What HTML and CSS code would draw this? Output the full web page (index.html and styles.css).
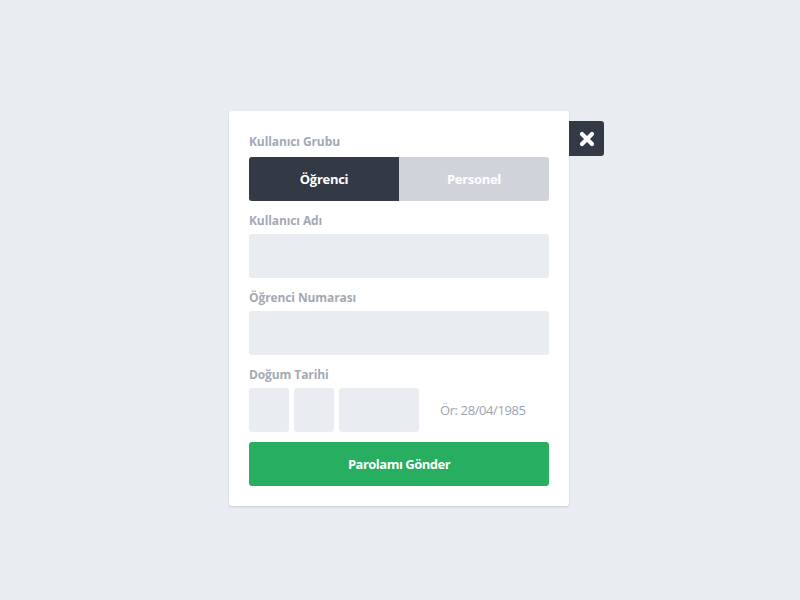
FILE: index.html
```html
<!DOCTYPE html>
<html lang="tr">
<head>
<meta charset="utf-8">
<title>Parola</title>
<link rel="stylesheet" href="styles.css">
</head>
<body>
<div class="page">
  <div class="card">
    <form class="form">
      <div class="field">
        <div class="label label-first">Kullanıcı Grubu</div>
        <div class="segment">
          <div class="seg seg-active">Öğrenci</div>
          <div class="seg">Personel</div>
        </div>
      </div>
      <div class="field">
        <div class="label">Kullanıcı Adı</div>
        <div class="input"></div>
      </div>
      <div class="field">
        <div class="label">Öğrenci Numarası</div>
        <div class="input"></div>
      </div>
      <div class="field">
        <div class="label">Doğum Tarihi</div>
        <div class="date-row">
          <div class="input small"></div>
          <div class="input small"></div>
          <div class="input year"></div>
          <div class="hint">Ör: 28/04/1985</div>
        </div>
      </div>
      <div class="submit">Parolamı Gönder</div>
    </form>
    <div class="close">
      <svg width="16" height="16" viewBox="0 0 16 16"><path d="M3 3 L13 13 M13 3 L3 13" stroke="#fff" stroke-width="4.2" stroke-linecap="round" fill="none"/></svg>
    </div>
  </div>
</div>
</body>
</html>
```

FILE: styles.css
```css
* { box-sizing: border-box; }
html, body { margin: 0; padding: 0; }
body {
  background: #e9ecf0;
  font-family: "Open Sans", "Liberation Sans", sans-serif;
  width: 800px;
  height: 600px;
  overflow: hidden;
}
.page {
  display: flex;
  justify-content: center;
  padding-top: 111px;
  padding-right: 2px;
}
.card {
  position: relative;
  width: 340px;
  background: #fff;
  border-radius: 3px;
  box-shadow: 0 1px 2px rgba(40, 50, 70, 0.18);
  padding: 21px 20px 20px;
}
.form {
  display: flex;
  flex-direction: column;
  gap: 10px;
}
.label {
  font-size: 12px;
  line-height: 16px;
  font-weight: 700;
  color: #a3a9b4;
  padding-top: 2px;
  margin-bottom: 5px;
  letter-spacing: -0.1px;
}
.label-first { margin-bottom: 7px; }
.segment {
  display: flex;
  height: 44px;
  border-radius: 3px;
  overflow: hidden;
  background: #d0d4da;
}
.seg {
  flex: 1;
  display: flex;
  align-items: center;
  justify-content: center;
  color: #fff;
  font-size: 13px;
  font-weight: 700;
  letter-spacing: -0.3px;
}
.seg-active { background: #333a46; }
.input {
  height: 44px;
  background: #e9ecf0;
  border-radius: 3px;
}
.date-row {
  display: flex;
  align-items: center;
  gap: 5px;
}
.input.small { width: 40px; }
.input.year { width: 80px; }
.hint {
  margin-left: 16px;
  font-size: 13px;
  color: #9ea4af;
  letter-spacing: -0.4px;
}
.submit {
  height: 44px;
  border-radius: 3px;
  background: #27ae60;
  color: #fff;
  font-size: 13px;
  font-weight: 700;
  display: flex;
  align-items: center;
  justify-content: center;
  letter-spacing: -0.5px;
}
.close {
  position: absolute;
  left: 100%;
  top: 10px;
  width: 35px;
  height: 35px;
  background: #333a46;
  border-radius: 0 3px 3px 0;
  display: flex;
  align-items: center;
  justify-content: center;
}
.close svg { display: block; }
```
